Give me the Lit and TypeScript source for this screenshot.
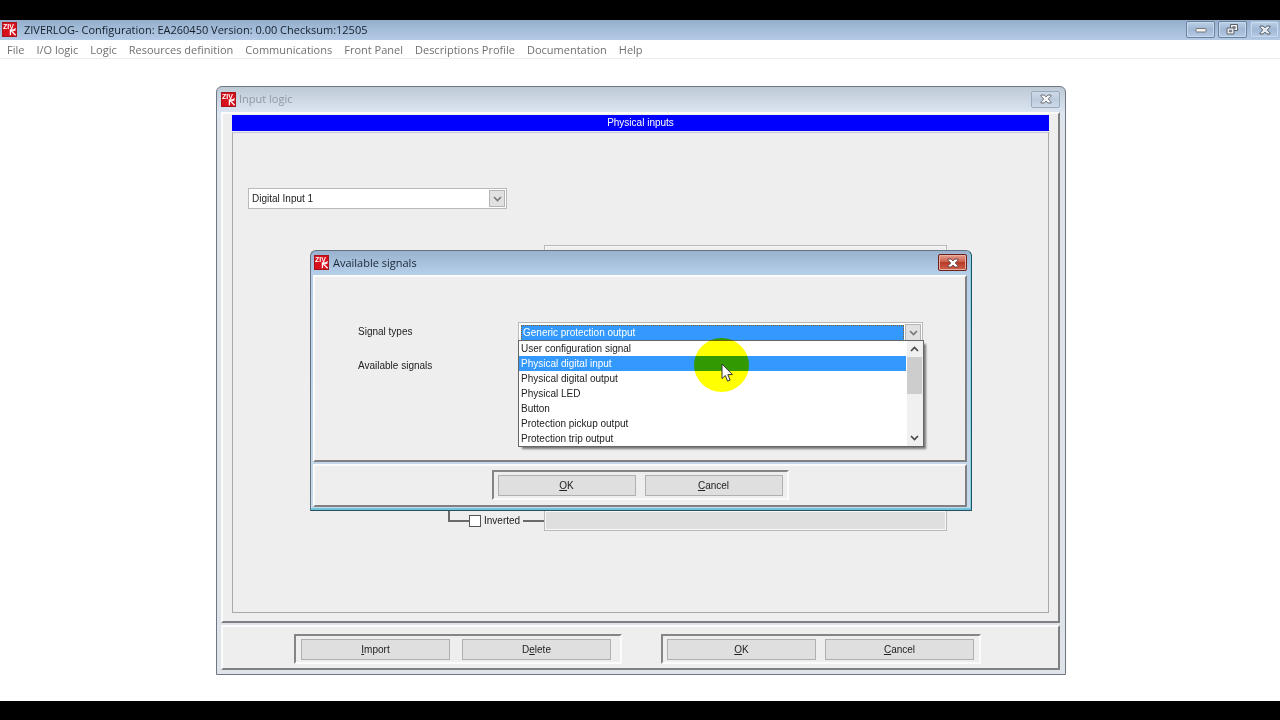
import { LitElement, html, css, svg } from "lit";
import { customElement, property, state } from "lit/decorators.js";
import { classMap } from "lit/directives/class-map.js";

const MENUS = [
  "File",
  "I/O logic",
  "Logic",
  "Resources definition",
  "Communications",
  "Front Panel",
  "Descriptions Profile",
  "Documentation",
  "Help",
];

const SIGNAL_TYPES = [
  "User configuration signal",
  "Physical digital input",
  "Physical digital output",
  "Physical LED",
  "Button",
  "Protection pickup output",
  "Protection trip output",
];

const closeGlyph = (fill: string, stroke: string) => html`
  <svg width="12" height="10" viewBox="0 0 12 10" aria-hidden="true">
    <path
      d="M1 1h3.2L6 2.9 7.8 1H11v1.2L8.3 5 11 7.8V9H7.8L6 7.1 4.2 9H1V7.8L3.7 5 1 2.2z"
      fill=${fill}
      stroke=${stroke}
      stroke-width="1"
    />
  </svg>
`;

const chevron = (up = false) => html`
  <svg width="9" height="6" viewBox="0 0 9 6" aria-hidden="true">
    <path d=${up ? "M1 5 4.5 1.5 8 5" : "M1 1 4.5 4.5 8 1"} fill="none" stroke="currentColor" stroke-width="1.6" />
  </svg>
`;

/** Red product badge shown at the left of each caption. */
@customElement("brand-icon")
export class BrandIcon extends LitElement {
  static styles = css`
    :host {
      display: block;
      width: 15px;
      height: 15px;
      flex: none;
    }
    .badge {
      display: block;
    }
    .name {
      font: bold 7px "Liberation Sans", Arial, sans-serif;
      fill: #fff;
    }
  `;

  render() {
    return html`
      <svg class="badge" width="15" height="15" viewBox="0 0 15 15" aria-hidden="true">
        <rect width="15" height="15" fill="#d8101c" />
        <rect x="0.5" y="0.5" width="14" height="14" fill="none" stroke="#a8141c" />
        ${svg`<text class="name" x="1" y="6.6">ZIV</text>`}
        <path d="M8.4 13.2V8h5M8.8 8.4l4.8 4.8M13.6 6.5 11 9" fill="none" stroke="#fff" stroke-width="1.3" />
      </svg>
    `;
  }
}

/** Flat push button with one underlined access letter. */
@customElement("push-button")
export class PushButton extends LitElement {
  @property() label = "";
  @property({ type: Number }) accessIndex = 0;

  static styles = css`
    :host {
      display: block;
      flex: 1;
    }
    .button {
      display: block;
      box-sizing: border-box;
      width: 100%;
      height: 21px;
      padding: 0;
      border: 1px solid #b0b0b0;
      background: #dfdfdf;
      color: #222;
      font: 10px/18px "Liberation Sans", Arial, sans-serif;
    }
    .access {
      text-decoration: underline;
      text-underline-offset: 1px;
    }
  `;

  render() {
    const i = this.accessIndex;
    return html`<button class="button" type="button">${this.label.slice(0, i)}<span class="access">${this.label.charAt(i)}</span>${this.label.slice(i + 1)}</button>`;
  }
}

@customElement("app-root")
export class AppRoot extends LitElement {
  @state() private active = 1;

  static styles = css`
    :host {
      display: flex;
      flex-direction: column;
      box-sizing: border-box;
      min-height: 100vh;
      border-top: 20px solid #000;
      border-bottom: 19px solid #000;
      background: #fff;
      color: #222;
      font: 10px/14px "Liberation Sans", Arial, sans-serif;
    }

    /* Main caption and menu */
    .caption {
      display: flex;
      align-items: center;
      box-sizing: border-box;
      height: 20px;
      padding: 0 1px 1px 2px;
      gap: 7px;
      background: linear-gradient(#94aecb, #b4cbe7);
      color: #16202c;
      font: 11px/18px "Open Sans", "Noto Sans", sans-serif;
    }
    .caption-text {
      flex: 1;
      margin: 0;
      font: inherit;
    }
    .caption-buttons {
      display: flex;
      gap: 3px;
    }
    .caption-button {
      display: grid;
      place-items: center;
      box-sizing: border-box;
      width: 29px;
      height: 17px;
      padding: 0;
      border: 1px solid #6c819c;
      border-radius: 2px;
      background: linear-gradient(#bdd0e7, #9fb8d5 50%, #b5cbe6);
      box-shadow: inset 0 0 0 1px #c9daee;
    }
    .caption-button.plain {
      border-color: #a9bfda;
    }
    .menu {
      display: flex;
      height: 18px;
      padding: 0 7px;
      gap: 12px;
      border-bottom: 1px solid #ececec;
      font: 11px/20px "Open Sans", "Noto Sans", sans-serif;
    }
    .menu-link {
      color: #707070;
      text-decoration: none;
    }

    .workspace {
      position: relative;
      flex: 1;
      padding: 27px 0 20px 2px;
    }

    /* Windows */
    .window {
      box-sizing: border-box;
      width: 850px;
      margin: 0 auto;
      padding: 0 5px 4px 4px;
      border: 1px solid #6f7680;
      border-radius: 6px 6px 0 0;
      background: linear-gradient(#bfcad7, #dce6f2 26px, #dfe3ea 40px);
    }
    .window-title {
      display: flex;
      align-items: center;
      box-sizing: border-box;
      gap: 3px;
      height: 25px;
      padding-bottom: 1px;
      color: #9097a2;
      font: 11px/18px "Open Sans", "Noto Sans", sans-serif;
    }
    .window-title .caption-button {
      border-color: #9aaabd;
      background: linear-gradient(#cfdae8, #bccbdc 50%, #cddaea);
      box-shadow: none;
    }
    .panel {
      box-sizing: border-box;
      background: #eee;
      border: solid;
      border-width: 2px;
      border-color: #fbfbfb #808083 #808083 #fbfbfb;
    }
    .inputs {
      height: 511px;
      padding: 1px 9px 8px;
      display: flex;
      flex-direction: column;
    }
    .heading {
      margin: 0;
      background: #0000fe;
      color: #fff;
      font: inherit;
      line-height: 16px;
      text-align: center;
    }
    .inputs-body {
      flex: 1;
      margin-top: 1px;
      padding: 55px 15px 0;
      border: 1px solid #aaa;
      border-top-color: #c4c4dc;
    }
    .combo {
      display: grid;
      grid-template-columns: 1fr 16px;
      box-sizing: border-box;
      padding: 1px;
      border: 1px solid #b9b9b9;
      background: #fff;
    }
    .input-combo {
      width: 259px;
      height: 21px;
    }
    .combo-select {
      grid-area: 1 / 1 / 2 / 3;
      appearance: none;
      min-width: 0;
      padding: 0 2px;
      border: 0;
      border-radius: 0;
      outline: 0;
      background: transparent;
      color: inherit;
      font: inherit;
    }
    .combo-arrow {
      grid-area: 1 / 2;
      display: grid;
      place-items: center;
      border: 1px solid #b4b4b4;
      background: #e1e1e1;
      color: #777;
      pointer-events: none;
    }
    .diagram {
      display: flex;
      flex-direction: column;
      justify-content: space-between;
      width: 499px;
      height: 286px;
      margin: 36px 0 0 200px;
    }
    .signal-field {
      box-sizing: border-box;
      width: 403px;
      height: 21px;
      padding: 0 4px;
      border: 1px solid #b9b9b9;
      border-radius: 0;
      box-shadow: inset 0 0 0 1px #f8f8f8;
      background: #dfdfdf;
      font: inherit;
    }
    .signal-top {
      align-self: flex-end;
      background: #eee;
    }
    .inverted-row {
      display: flex;
      align-items: center;
    }
    .wire {
      flex: none;
      width: 21px;
      height: 2px;
      background: #6a6a6a;
    }
    .wire-corner {
      flex: none;
      align-self: flex-start;
      box-sizing: border-box;
      width: 21px;
      height: 12px;
      border: solid #6a6a6a;
      border-width: 0 0 2px 2px;
    }
    .inverted {
      display: flex;
      align-items: center;
      gap: 3px;
      flex: 1;
    }
    .check {
      appearance: none;
      box-sizing: border-box;
      width: 12px;
      height: 12px;
      margin: 0;
      border: 1px solid #555;
      background: #fff;
    }
    .actions {
      display: flex;
      gap: 39px;
      height: 45px;
      margin-top: 2px;
      padding: 7px 0 0 71px;
    }
    .well {
      display: flex;
      box-sizing: border-box;
      height: 30px;
      padding: 3px 4px;
      border: solid;
      border-width: 2px;
      border-color: #858585 #fbfbfb #fbfbfb #858585;
    }
    .well-edit {
      width: 328px;
      gap: 12px;
      padding: 3px 9px 3px 5px;
    }
    .well-confirm {
      width: 320px;
      gap: 9px;
      padding-right: 5px;
    }

    /* Signal picker dialog, floating over the input window */
    .dialog {
      position: absolute;
      top: 191px;
      left: calc(50% - 330px);
      width: 662px;
      padding: 0 4px 3px 2px;
      border-color: #66727f #1f5266 #24505f #66727f;
      box-shadow: inset 0 -2px 0 #6fc4dc, inset -1px 0 0 #86cfe2;
      background: linear-gradient(#98b2cf, #b7d0ea 24px, #c7d9ea);
    }
    .dialog .window-title {
      height: 24px;
      gap: 4px;
      padding: 0 0 1px 1px;
      color: #1b2836;
    }
    .dialog .window-title .caption-button {
      border-color: #6d2018;
      background: linear-gradient(#e5a090, #cd5c4b 45%, #b53a28 50%, #d0624c);
      box-shadow: inset 0 0 0 1px #e8b0a4;
    }
    .picker {
      height: 187px;
      padding: 45px 42px 0;
    }
    .form-row {
      display: grid;
      grid-template-columns: 161px 1fr;
      margin-bottom: 15px;
      align-items: center;
      min-height: 19px;
    }
    .form-label {
      padding-left: 1px;
    }
    .picker-field {
      position: relative;
    }
    .type-combo {
      height: 19px;
    }
    .type-combo .combo-select {
      grid-area: 1 / 1;
      margin: 1px;
      padding: 0 1px;
      border: 1px dotted #8a5a20;
      background: #3399ff;
      color: #fff;
    }
    .dropdown {
      position: absolute;
      top: 18px;
      left: 0;
      right: -1px;
      display: grid;
      grid-template-columns: 1fr 16px;
      gap: 1px;
      border: 1px solid #666;
      background: #fff;
      box-shadow: 3px 3px 2px -1px #777;
    }
    .options {
      margin: 0;
      padding: 0;
      list-style: none;
    }
    .option {
      padding-left: 2px;
      line-height: 15px;
    }
    .option.active {
      background: #3399ff;
      color: #fff;
    }
    .scrollbar {
      display: grid;
      grid-template-rows: 16px 37px 1fr 16px;
      justify-items: center;
      align-items: center;
      padding-right: 1px;
      background: #f0f0f0;
      color: #444;
    }
    .thumb {
      align-self: stretch;
      justify-self: stretch;
      background: #cdcdcd;
    }
    .scroll-down {
      grid-row: 4;
    }
    .dialog .actions {
      height: 43px;
      margin-top: 2px;
      padding: 4px 0 0;
      justify-content: center;
    }
    .dialog .well {
      width: 297px;
      gap: 9px;
    }

    /* Pointer and its click highlight */
    .halo {
      position: absolute;
      top: 279px;
      left: calc(50% + 54px);
      width: 55px;
      height: 54px;
      border-radius: 50%;
      background: #ffff00;
      mix-blend-mode: multiply;
      pointer-events: none;
    }
    .pointer {
      position: absolute;
      top: 304px;
      left: calc(50% + 81px);
      pointer-events: none;
    }
  `;

  render() {
    return html`
      <header>
        <div class="caption">
          <brand-icon></brand-icon>
          <h1 class="caption-text">ZIVERLOG- Configuration: EA260450 Version: 0.00 Checksum:12505</h1>
          <div class="caption-buttons">
            <button class="caption-button" type="button" aria-label="Minimize">
              <svg width="12" height="6" viewBox="0 0 12 6" aria-hidden="true">
                <rect x="1" y="1.5" width="10" height="3.5" rx="0.5" fill="#f4f4f4" stroke="#777" />
              </svg>
            </button>
            <button class="caption-button" type="button" aria-label="Restore">
              <svg width="13" height="11" viewBox="0 0 13 11" aria-hidden="true">
                <path d="M4.5.5h7v6h-7z" fill="#f4f4f4" stroke="#5a6068" />
                <path d="M6.8 2.7h2.4v1.6H6.8z" fill="#8fa6c0" stroke="#5a6068" stroke-width="0.8" />
                <path d="M1 4h7v6H1z" fill="#f4f4f4" stroke="#5a6068" />
                <path d="M3.3 6.2h2.4v1.6H3.3z" fill="#8fa6c0" stroke="#5a6068" stroke-width="0.8" />
              </svg>
            </button>
            <button class="caption-button plain" type="button" aria-label="Close">${closeGlyph("#e4e9ef", "#5a6068")}</button>
          </div>
        </div>
        <nav class="menu">${MENUS.map((m) => html`<a class="menu-link" href="#">${m}</a>`)}</nav>
      </header>
      <main class="workspace">
        ${this.renderInputWindow()} ${this.renderPicker()}
        <div class="halo"></div>
        <svg class="pointer" width="13" height="20" viewBox="0 0 13 20" aria-hidden="true">
          <path
            d="M1 1v14.6l3.3-3.1 2.3 5.6 2.5-1-2.3-5.5h4.6z"
            fill="#fff"
            stroke="#333"
            stroke-width="1"
            stroke-linejoin="round"
          />
        </svg>
      </main>
    `;
  }

  private renderInputWindow() {
    return html`
      <section class="window" aria-label="Input logic">
        <div class="window-title">
          <brand-icon></brand-icon>
          <span class="caption-text">Input logic</span>
          <button class="caption-button" type="button" aria-label="Close input logic">${closeGlyph("#f4f6f8", "#6b7077")}</button>
        </div>
        <div class="panel inputs">
          <h2 class="heading">Physical inputs</h2>
          <div class="inputs-body">
            <div class="combo input-combo">
              <select class="combo-select" aria-label="Physical input">
                <option>Digital Input 1</option>
              </select>
              <span class="combo-arrow">${chevron()}</span>
            </div>
            <div class="diagram">
              <input class="signal-field signal-top" aria-label="Signal" readonly />
              <div class="inverted-row">
                <span class="wire-corner"></span>
                <label class="inverted"><input class="check" type="checkbox" />Inverted</label>
                <span class="wire"></span>
                <input class="signal-field" aria-label="Inverted signal" disabled />
              </div>
            </div>
          </div>
        </div>
        <div class="panel actions">
          <div class="well well-edit">
            <push-button label="Import"></push-button>
            <push-button label="Delete" .accessIndex=${1}></push-button>
          </div>
          <div class="well well-confirm">
            <push-button label="OK"></push-button>
            <push-button label="Cancel"></push-button>
          </div>
        </div>
      </section>
    `;
  }

  private renderPicker() {
    return html`
      <section class="window dialog" role="dialog" aria-label="Available signals">
        <div class="window-title">
          <brand-icon></brand-icon>
          <span class="caption-text">Available signals</span>
          <button class="caption-button" type="button" aria-label="Close available signals">${closeGlyph("#fff", "#6b4440")}</button>
        </div>
        <div class="panel picker">
          <div class="form-row">
            <label class="form-label" for="signal-type">Signal types</label>
            <div class="picker-field">
              <div class="combo type-combo">
                <select class="combo-select" id="signal-type">
                  <option>Generic protection output</option>
                </select>
                <span class="combo-arrow">${chevron()}</span>
              </div>
              <div class="dropdown">
                <ul class="options" role="listbox" aria-label="Signal types">
                  ${SIGNAL_TYPES.map(
                    (name, i) => html`<li
                      class=${classMap({ option: true, active: i === this.active })}
                      role="option"
                      aria-selected=${i === this.active}
                      @mouseenter=${() => (this.active = i)}
                    >
                      ${name}
                    </li>`
                  )}
                </ul>
                <div class="scrollbar">
                  ${chevron(true)}
                  <span class="thumb"></span>
                  <span class="scroll-down">${chevron()}</span>
                </div>
              </div>
            </div>
          </div>
          <div class="form-row"><span class="form-label">Available signals</span></div>
        </div>
        <div class="panel actions">
          <div class="well">
            <push-button label="OK"></push-button>
            <push-button label="Cancel"></push-button>
          </div>
        </div>
      </section>
    `;
  }
}
